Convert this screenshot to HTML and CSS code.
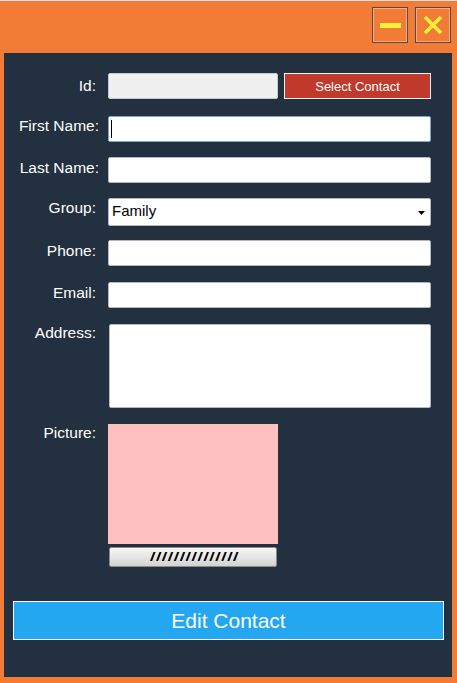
FILE: index.html
```html
<!DOCTYPE html>
<html>
<head>
<meta charset="utf-8">
<link rel="stylesheet" href="styles.css">
</head>
<body>
<div class="edge"></div>
<div class="titlebar">
  <div class="winbtn"><span class="minus"></span></div>
  <div class="winbtn">
    <svg class="xicon" width="20" height="20" viewBox="0 0 20 20"><path d="M2 2 L18 18 M18 2 L2 18" stroke="#ffee3c" stroke-width="3.6" fill="none"/></svg>
  </div>
</div>
<div class="panel">
  <div class="form">
    <div class="label pt4">Id:</div>
    <div class="idrow">
      <div class="input readonly"></div>
      <div class="btn-select">Select Contact</div>
    </div>

    <div class="label pt1 wide">First Name:</div>
    <div><div class="input focused"><span class="caret"></span></div></div>

    <div class="label wide">Last Name:</div>
    <div><div class="input"></div></div>

    <div class="label pt1">Group:</div>
    <div>
      <div class="select">
        <span>Family</span>
        <svg class="arrow" width="7" height="4" viewBox="0 0 7 4"><polygon points="0,0 7,0 3.5,4" fill="#000"/></svg>
      </div>
    </div>

    <div class="label">Phone:</div>
    <div><div class="input"></div></div>

    <div class="label">Email:</div>
    <div><div class="input"></div></div>

    <div class="label pt0">Address:</div>
    <div><div class="input textarea"></div></div>

    <div class="label pt0">Picture:</div>
    <div>
      <div class="pic"></div>
      <div class="browse">///////////////</div>
    </div>
  </div>
  <div class="btn-edit">Edit Contact</div>
</div>
</body>
</html>
```
FILE: styles.css
```css
html, body {
  margin: 0;
  padding: 0;
}
body {
  width: 457px;
  height: 683px;
  background: #f27b36;
  font-family: "Liberation Sans", Arial, sans-serif;
  overflow: hidden;
}
.edge {
  height: 1px;
  background: #dfe3e8;
}
.titlebar {
  height: 52px;
  box-sizing: border-box;
  display: flex;
  justify-content: flex-end;
  align-items: flex-start;
  gap: 7px;
  padding: 6px 6px 0 0;
}
.winbtn {
  width: 36px;
  height: 36px;
  box-sizing: border-box;
  border: 1px solid #4d4d4d;
  box-shadow: inset 0 0 0 1px #f9ab80;
  display: flex;
  align-items: center;
  justify-content: center;
}
.minus {
  display: block;
  width: 21px;
  height: 5px;
  background: #ffee3c;
}
.xicon {
  display: block;
}
.panel {
  margin-left: 4px;
  width: 448px;
  height: 624px;
  box-sizing: border-box;
  background: #22303f;
  padding-top: 20px;
}
.form {
  display: grid;
  grid-template-columns: 104px 1fr;
  grid-template-rows: 43px 41px 41px 42px 42px 42px 100px auto;
  padding-right: 21px;
}
.label {
  color: #fff;
  font-size: 15.5px;
  line-height: 18px;
  text-align: right;
  padding-right: 12px;
  padding-top: 2px;
  white-space: nowrap;
}
.label.wide {
  margin-right: -3px;
}
.pt0 { padding-top: 0; }
.pt1 { padding-top: 1px; }
.pt4 { padding-top: 4px; }
.input {
  height: 26px;
  box-sizing: border-box;
  background: #fff;
  border: 1px solid #b3b8c0;
  border-radius: 2px;
}
.input.focused {
  border-color: #7ba7d4;
  padding: 3px 0 0 2px;
}
.caret {
  display: block;
  width: 1px;
  height: 18px;
  background: #000;
}
.idrow {
  display: flex;
  gap: 6px;
}
.input.readonly {
  width: 170px;
  background: #f0f0f0;
  border-color: #c5c9cf;
}
.btn-select {
  width: 147px;
  height: 26px;
  box-sizing: border-box;
  background: #c0392b;
  border: 1px solid #f4f4f4;
  color: #fff;
  font-size: 13px;
  display: flex;
  align-items: center;
  justify-content: center;
}
.select {
  height: 28px;
  box-sizing: border-box;
  background: #fff;
  border: 1px solid #b3b8c0;
  border-radius: 2px;
  display: flex;
  justify-content: space-between;
  align-items: flex-start;
  padding: 3px 5px 0 3px;
  font-size: 15px;
  line-height: 17px;
  color: #000;
}
.arrow {
  display: block;
  margin-top: 9px;
}
.input.textarea {
  height: 84px;
  margin-left: 1px;
}
.pic {
  width: 170px;
  height: 120px;
  background: #ffbfbf;
}
.browse {
  margin: 3px 0 0 1px;
  width: 168px;
  height: 20px;
  box-sizing: border-box;
  border: 1px solid #8a8a8a;
  border-radius: 2px;
  background: linear-gradient(#f6f6f6, #e6e6e6 50%, #d2d2d2);
  color: #000;
  font-size: 12px;
  font-weight: bold;
  font-style: italic;
  letter-spacing: 2.6px;
  line-height: 18px;
  text-align: center;
  text-indent: 4px;
  text-shadow: 0.5px 0 0 #000;
}
.btn-edit {
  margin: 34px 8px 0 9px;
  height: 39px;
  box-sizing: border-box;
  background: #22a7f0;
  border: 1px solid #fff;
  color: #fff;
  font-size: 21px;
  display: flex;
  align-items: center;
  justify-content: center;
}
```
